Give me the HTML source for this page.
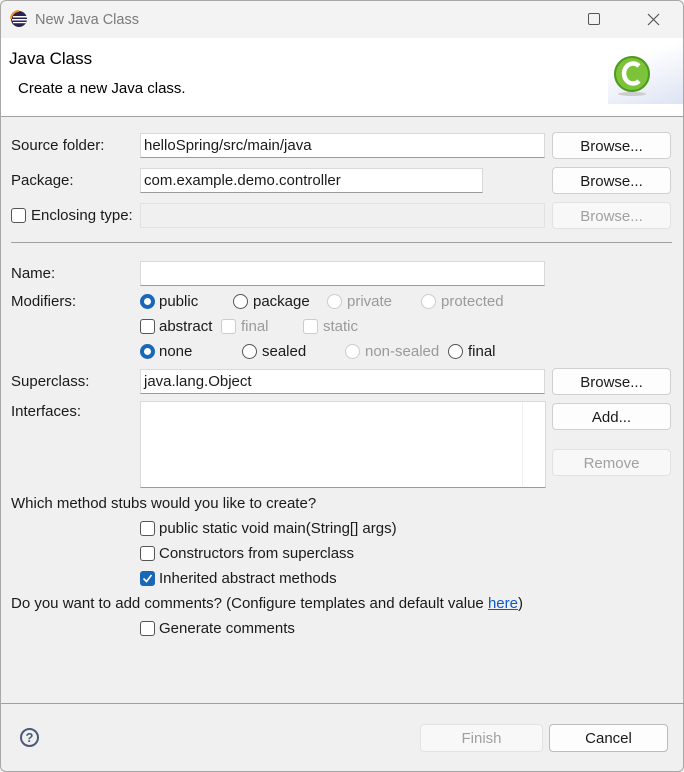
<!DOCTYPE html>
<html><head><style>
*{box-sizing:border-box;margin:0;padding:0}
body{width:684px;height:772px;background:#f0f0f0;font-family:"Liberation Sans",sans-serif;font-size:15px;color:#1a1a1a;position:relative;overflow:hidden}
.a{position:absolute;white-space:nowrap}
.t{position:absolute;line-height:18px;white-space:nowrap}
.in{position:absolute;background:#fff;border:1px solid #d9d9d9;border-bottom:1px solid #9a9a9a;padding-left:3px;line-height:24px}
.btn{position:absolute;background:#fdfdfd;border:1px solid #d0d0d0;border-radius:4px;text-align:center;line-height:27px}
.dis{color:#a0a0a0;background:#f8f8f8;border-color:#e2e2e2}
.rb{position:absolute;width:15px;height:15px;border:1px solid #555;border-radius:50%;background:#fff}
.rb.on{border:4px solid #1a67b8;background:#fff}
.rb.d{border-color:#ccc}
.cb{position:absolute;width:15px;height:15px;border:1px solid #555;border-radius:3px;background:#fff}
.cb.d{border-color:#ccc}
.g{color:#9a9a9a}
</style></head><body>
<div class="a" style="left:0;top:0;width:684px;height:38px;background:#f3f3f3"></div>
<svg class="a" style="left:10px;top:10px" width="18" height="18"><circle cx="9" cy="9" r="8" fill="#2c2255"/><path d="M1 9 A8 8 0 0 1 9 1" stroke="#f7941e" stroke-width="2" fill="none"/><rect x="3" y="6" width="14" height="1.5" fill="#fff"/><rect x="2" y="9" width="15" height="1.5" fill="#fff"/><rect x="3" y="12" width="13" height="1.2" fill="#fff"/></svg>
<div class="t" style="left:35px;top:11px;color:#7a7a7a;font-size:14.5px">New Java Class</div>
<div class="a" style="left:588px;top:13px;width:12px;height:12px;border:1px solid #555;border-radius:2px"></div>
<svg class="a" style="left:647px;top:13px" width="13" height="13"><path d="M1 1L12 12M12 1L1 12" stroke="#555" stroke-width="1.2"/></svg>
<div class="a" style="left:0;top:38px;width:684px;height:79px;background:#fff;border-bottom:1px solid #a0a0a0"></div>
<div class="a" style="left:608px;top:38px;width:76px;height:66px;background:linear-gradient(160deg,#fff 30%,#dde3f3)"></div>
<svg class="a" style="left:609px;top:50px" width="46" height="48"><ellipse cx="23" cy="44" rx="14" ry="2" fill="#ccc"/><circle cx="23" cy="24" r="17" fill="#7cc33a" stroke="#4a9a1c" stroke-width="2"/><path d="M30 16 A9 10 0 1 0 30 31" stroke="#fff" stroke-width="4.5" fill="none"/></svg>
<div class="t" style="left:9px;top:50px;font-size:17px;color:#000">Java Class</div>
<div class="t" style="left:18px;top:80px;color:#000">Create a new Java class.</div>

<div class="t" style="left:11px;top:137px">Source folder:</div>
<div class="in" style="left:140px;top:133px;width:405px;height:25px">helloSpring/src/main/java</div>
<div class="btn" style="left:552px;top:132px;width:119px;height:27px">Browse...</div>
<div class="t" style="left:11px;top:172px">Package:</div>
<div class="in" style="left:140px;top:168px;width:343px;height:25px">com.example.demo.controller</div>
<div class="btn" style="left:552px;top:167px;width:119px;height:27px">Browse...</div>
<div class="cb" style="left:11px;top:208px"></div>
<div class="t" style="left:31px;top:207px">Enclosing type:</div>
<div class="in" style="left:140px;top:203px;width:405px;height:25px;background:#f0f0f0;border-color:#e2e2e2"></div>
<div class="btn dis" style="left:552px;top:202px;width:119px;height:27px">Browse...</div>
<div class="a" style="left:11px;top:242px;width:661px;height:1px;background:#a0a0a0"></div>

<div class="t" style="left:11px;top:265px">Name:</div>
<div class="in" style="left:140px;top:261px;width:405px;height:25px"></div>
<div class="t" style="left:11px;top:293px">Modifiers:</div>
<div class="rb on" style="left:140px;top:294px"></div><div class="t" style="left:159px;top:293px">public</div>
<div class="rb" style="left:233px;top:294px"></div><div class="t" style="left:253px;top:293px">package</div>
<div class="rb d" style="left:327px;top:294px"></div><div class="t g" style="left:347px;top:293px">private</div>
<div class="rb d" style="left:421px;top:294px"></div><div class="t g" style="left:441px;top:293px">protected</div>
<div class="cb" style="left:140px;top:319px"></div><div class="t" style="left:159px;top:318px">abstract</div>
<div class="cb d" style="left:221px;top:319px"></div><div class="t g" style="left:241px;top:318px">final</div>
<div class="cb d" style="left:303px;top:319px"></div><div class="t g" style="left:323px;top:318px">static</div>
<div class="rb on" style="left:140px;top:344px"></div><div class="t" style="left:159px;top:343px">none</div>
<div class="rb" style="left:242px;top:344px"></div><div class="t" style="left:262px;top:343px">sealed</div>
<div class="rb d" style="left:345px;top:344px"></div><div class="t g" style="left:365px;top:343px">non-sealed</div>
<div class="rb" style="left:448px;top:344px"></div><div class="t" style="left:468px;top:343px">final</div>

<div class="t" style="left:11px;top:373px">Superclass:</div>
<div class="in" style="left:140px;top:369px;width:405px;height:25px">java.lang.Object</div>
<div class="btn" style="left:552px;top:368px;width:119px;height:27px">Browse...</div>
<div class="t" style="left:11px;top:403px">Interfaces:</div>
<div class="in" style="left:140px;top:401px;width:406px;height:87px;border-bottom-color:#9a9a9a"></div>
<div class="a" style="left:522px;top:403px;width:1px;height:83px;background:#eee"></div>
<div class="btn" style="left:552px;top:403px;width:119px;height:27px">Add...</div>
<div class="btn dis" style="left:552px;top:449px;width:119px;height:27px">Remove</div>

<div class="t" style="left:11px;top:495px">Which method stubs would you like to create?</div>
<div class="cb" style="left:140px;top:521px"></div><div class="t" style="left:159px;top:520px">public static void main(String[] args)</div>
<div class="cb" style="left:140px;top:546px"></div><div class="t" style="left:159px;top:545px">Constructors from superclass</div>
<div class="cb" style="left:140px;top:571px;background:#1a67b8;border-color:#1a67b8"><svg width="13" height="13" style="position:absolute;left:0;top:0"><path d="M2.5 6.5 L5.5 9.5 L10.5 3" stroke="#fff" stroke-width="1.6" fill="none"/></svg></div><div class="t" style="left:159px;top:570px">Inherited abstract methods</div>
<div class="t" style="left:11px;top:595px">Do you want to add comments? (Configure templates and default value <span style="color:#0a58ca;text-decoration:underline">here</span>)</div>
<div class="cb" style="left:140px;top:621px"></div><div class="t" style="left:159px;top:620px">Generate comments</div>

<div class="a" style="left:0;top:703px;width:684px;height:1px;background:#a0a0a0"></div>
<div class="a" style="left:20px;top:728px;width:19px;height:19px;border:2px solid #4a5a7a;border-radius:50%;text-align:center;font-size:13px;line-height:15px;font-weight:bold;color:#4a5a7a">?</div>
<div class="btn dis" style="left:420px;top:724px;width:123px;height:28px;line-height:28px">Finish</div>
<div class="btn" style="left:549px;top:724px;width:119px;height:28px;line-height:28px;border-color:#bbb">Cancel</div>
<div class="a" style="left:0;top:0;width:684px;height:772px;border:1px solid #a8a8a8;border-radius:6px"></div>
</body></html>
